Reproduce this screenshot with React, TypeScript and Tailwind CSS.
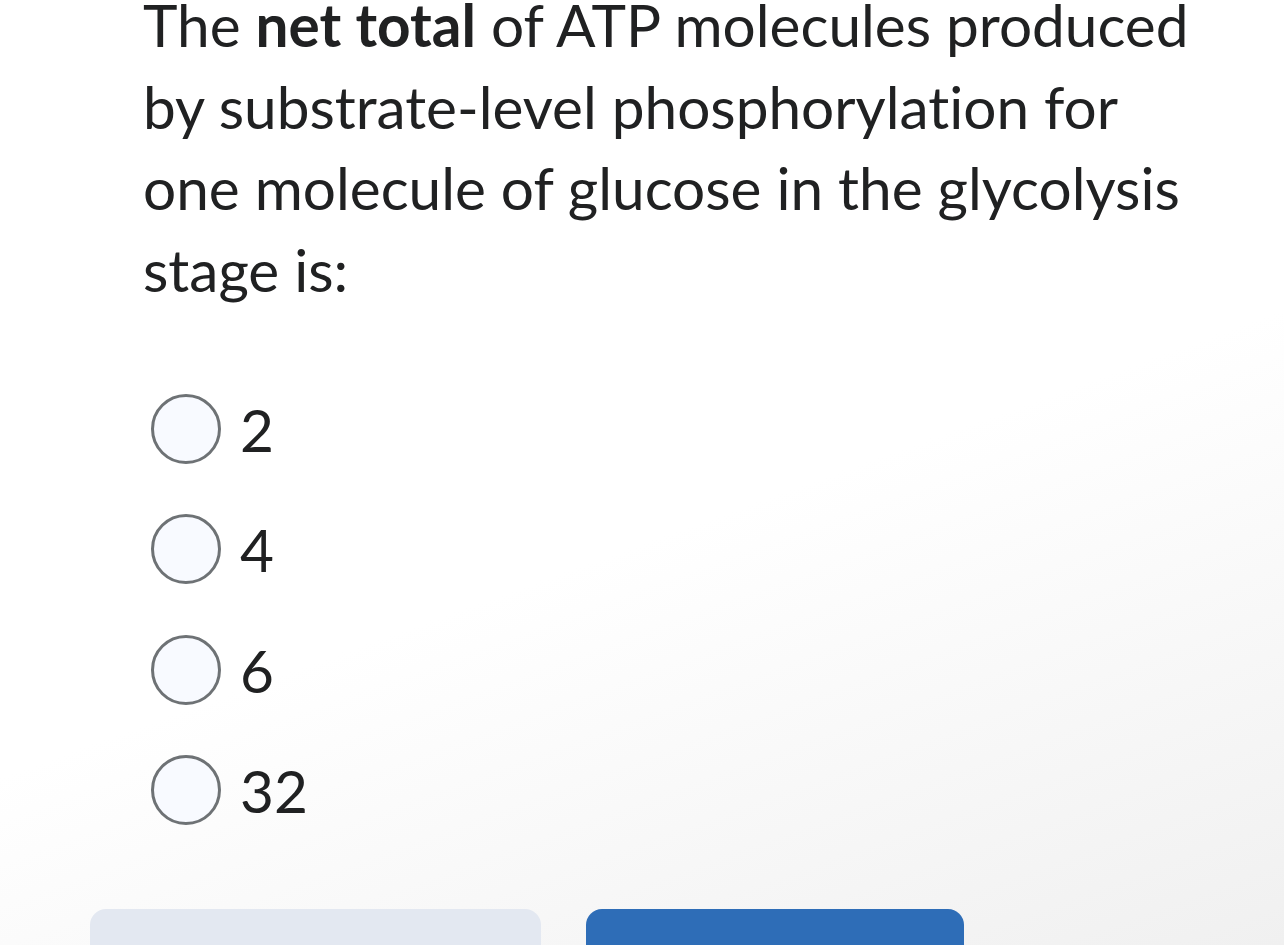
import React from "react";

const options = ["2", "4", "6", "32"];

export default function App() {
  return (
    <div
      className="h-[945px] w-[1284px] overflow-hidden bg-[linear-gradient(160deg,#ffffff_0%,#ffffff_55%,#f0f0f0_100%)] text-[#202122] [font-variant-ligatures:none]"
      style={{ fontFamily: "Lato, 'Noto Sans', sans-serif" }}
    >
      <div className="ml-[143px] mt-[-16px] w-[1060px]">
        <p className="text-[58.5px] leading-[81.7px]">
          The <b className="font-bold">net total</b> of ATP molecules produced by substrate-level phosphorylation for
          one molecule of glucose in the glycolysis stage is:
        </p>
        <div className="ml-[8px] mt-[83px] flex flex-col gap-[50.5px]">
          {options.map((o) => (
            <label key={o} className="flex h-[70px] items-center gap-[19px]">
              <span className="box-border h-[70px] w-[70px] shrink-0 rounded-full border-[3px] border-[#6e7275] bg-[#f8faff]" />
              <span className="text-[58.5px] leading-none">{o}</span>
            </label>
          ))}
        </div>
      </div>
      <div className="ml-[90px] mt-[84px] flex gap-[45px]">
        <div className="h-[60px] w-[451px] rounded-[16px] bg-[#e3e8f1]" />
        <div className="h-[60px] w-[378px] rounded-[16px] bg-[#2e6db7]" />
      </div>
    </div>
  );
}
